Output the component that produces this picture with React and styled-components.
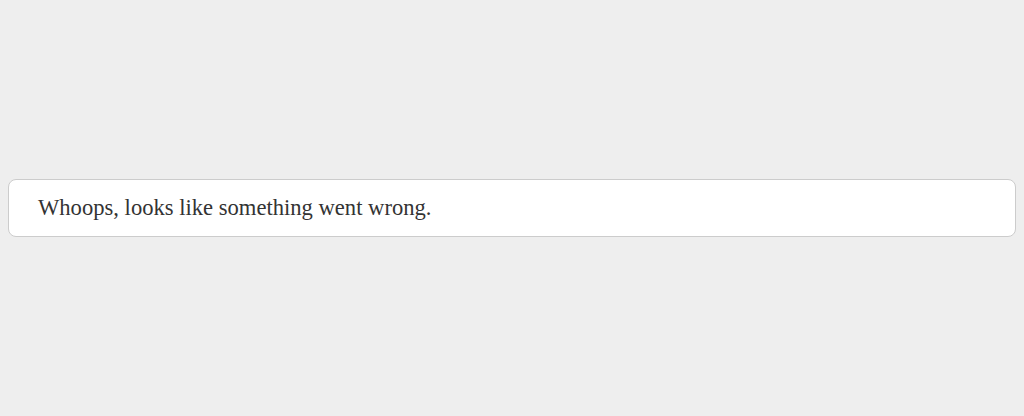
import React from 'react';
import styled, { createGlobalStyle } from 'styled-components';

const GlobalStyle = createGlobalStyle`
  html, body {
    margin: 0;
    padding: 0;
    background: #eeeeee;
  }
`;

const Page = styled.div`
  box-sizing: border-box;
  display: flex;
  align-items: center;
  height: 416px;
  padding: 0 8px;
`;

const Panel = styled.div`
  box-sizing: border-box;
  width: 100%;
  height: 58px;
  display: flex;
  align-items: center;
  padding: 0 29px;
  background: #ffffff;
  border: 1px solid #cccccc;
  border-radius: 8px;
`;

const Message = styled.p`
  margin: 0;
  color: #333333;
  font-family: "Liberation Serif", "DejaVu Serif", serif;
  font-size: 22.6px;
`;

function App() {
  return (
    <>
      <GlobalStyle />
      <Page>
        <Panel>
          <Message>Whoops, looks like something went wrong.</Message>
        </Panel>
      </Page>
    </>
  );
}

export default App;
